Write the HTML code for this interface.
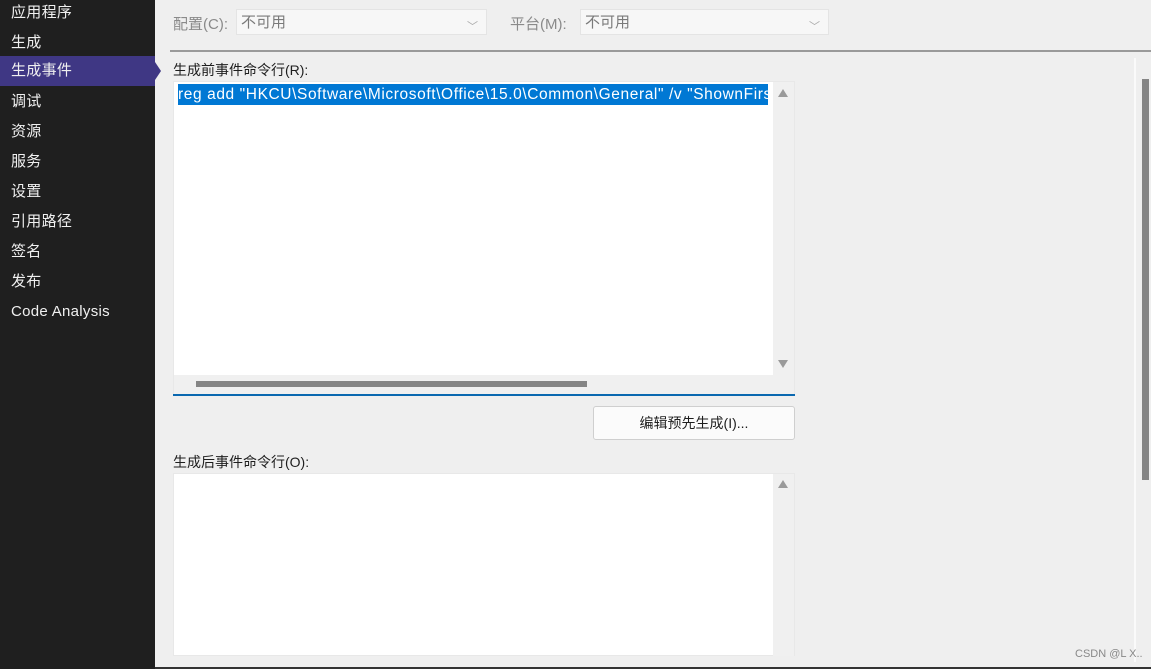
<!DOCTYPE html>
<html><head><meta charset="utf-8"><style>
*{margin:0;padding:0;box-sizing:border-box}
body{width:1151px;height:669px;background:#efefef;position:relative;overflow:hidden;font-family:"Liberation Sans","Noto Sans CJK SC",sans-serif;font-size:15px;color:#1e1e1e}
.side{position:absolute;left:0;top:0;width:155px;height:669px;background:#1f1f1f}
.side div{position:absolute;left:0;width:155px;height:30px;line-height:32px;padding-left:11px;color:#f0f0f0;font-size:15px;letter-spacing:0.3px}
.sel{background:#3f3784}
.arrow{position:absolute;left:155px;top:62px;width:0;height:0;border-top:9px solid transparent;border-bottom:9px solid transparent;border-left:6px solid #3f3784}
.abs{position:absolute}
.lbl{color:#8a8a8a}
.combo{position:absolute;background:#f7f7f7;border:1px solid #e4e4e4;height:26px;line-height:24px;padding-left:4px;color:#7a7a7a}
.chev{position:absolute;right:8px;top:4px;color:#aaa;font-size:11px}
.tb{position:absolute;background:#fff;border:1px solid #e8e8e8}
.vs{position:absolute;background:#f0f0f0}
.tri{position:absolute;width:0;height:0;border-left:5px solid transparent;border-right:5px solid transparent}
</style></head><body>
<div class="side">
<div style="top:-3px">应用程序</div>
<div style="top:27px">生成</div>
<div class="sel" style="top:56px;line-height:30px">生成事件</div>
<div style="top:86px">调试</div>
<div style="top:116px">资源</div>
<div style="top:146px">服务</div>
<div style="top:176px">设置</div>
<div style="top:206px">引用路径</div>
<div style="top:236px">签名</div>
<div style="top:266px">发布</div>
<div style="top:296px">Code Analysis</div>
</div>
<div class="arrow"></div>
<div class="abs lbl" style="left:173px;top:13px">配置(C):</div>
<div class="combo" style="left:236px;top:9px;width:251px;line-height:26px">不可用<span class="chev">﹀</span></div>
<div class="abs lbl" style="left:510px;top:13px">平台(M):</div>
<div class="combo" style="left:580px;top:9px;width:249px;line-height:26px">不可用<span class="chev">﹀</span></div>
<div class="abs" style="left:170px;top:50px;width:981px;height:2px;background:#9a9a9a"></div>
<div class="abs" style="left:173px;top:60px;font-size:14px">生成前事件命令行(R):</div>
<div class="tb" style="left:173px;top:81px;width:622px;height:314px"></div>
<div class="abs" style="left:178px;top:84px;height:21px;width:590px;background:#0078d4;color:#fff;line-height:22px;font-size:15.5px;letter-spacing:0.6px;white-space:nowrap;overflow:hidden">reg add "HKCU\Software\Microsoft\Office\15.0\Common\General" /v "ShownFirstRunOptin"</div>
<div class="vs" style="left:773px;top:82px;width:21px;height:293px"></div>
<div class="tri" style="left:778px;top:89px;border-bottom:8px solid #9a9a9a"></div>
<div class="tri" style="left:778px;top:360px;border-top:8px solid #9a9a9a"></div>
<div class="vs" style="left:174px;top:375px;width:620px;height:19px"></div>
<div class="abs" style="left:196px;top:381px;width:391px;height:6px;background:#858585"></div>
<div class="abs" style="left:173px;top:394px;width:622px;height:2px;background:#0a68b0"></div>
<div class="abs" style="left:593px;top:406px;width:202px;height:34px;background:#fbfbfb;border:1px solid #cfcfcf;border-radius:3px;text-align:center;line-height:32px;font-size:14px">编辑预先生成(I)...</div>
<div class="abs" style="left:173px;top:452px;font-size:14px">生成后事件命令行(O):</div>
<div class="tb" style="left:173px;top:473px;width:622px;height:183px"></div>
<div class="vs" style="left:773px;top:474px;width:21px;height:182px"></div>
<div class="tri" style="left:778px;top:480px;border-bottom:8px solid #9a9a9a"></div>
<div class="abs" style="left:1134px;top:58px;width:2px;height:604px;background:#fafafa"></div>
<div class="abs" style="left:1142px;top:79px;width:7px;height:401px;background:#858585"></div>
<div class="abs" style="left:1075px;top:648px;font-size:11px;color:#888">CSDN @L X..</div>
<div class="abs" style="left:155px;top:667px;width:996px;height:2px;background:#333"></div>
</body></html>
